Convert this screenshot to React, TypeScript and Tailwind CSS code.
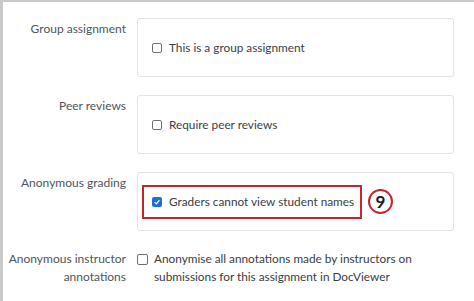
import React from "react";

const textFont = { fontFamily: "Lato, 'Open Sans', sans-serif" };

function Box({ children }: { children: React.ReactNode }) {
  return (
    <div className="flex h-[59px] w-[317px] items-center rounded-[3px] border border-[#e1e3e5] pl-[14px]">
      {children}
    </div>
  );
}

function Check({ checked = false, label }: { checked?: boolean; label: string }) {
  return (
    <label className="flex items-center gap-[7px] text-[11.8px] text-[#394045]">
      {checked ? (
        <span className="flex h-[10px] w-[10px] items-center justify-center rounded-[2px] bg-[#1a6fe0]">
          <svg viewBox="0 0 10 10" className="h-[8px] w-[8px]">
            <path d="M2 5.2 L4.2 7.3 L8 2.8" fill="none" stroke="white" strokeWidth="1.6" />
          </svg>
        </span>
      ) : (
        <span className="h-[10px] w-[10px] rounded-[2px] border border-[#6b7075] bg-white" />
      )}
      <span>{label}</span>
    </label>
  );
}

export default function App() {
  return (
    <div
      className="h-[301px] w-[474px] overflow-hidden border-t-2 border-l-[3px] border-[#c9c9c9] bg-white"
      style={textFont}
    >
      <div className="flex flex-col pt-[16px]">
        <div className="flex">
          <div className="w-[123px] pt-[2px] text-right text-[12px] text-[#4f555a]">Group assignment</div>
          <div className="ml-[11px]">
            <Box>
              <Check label="This is a group assignment" />
            </Box>
          </div>
        </div>

        <div className="mt-[18px] flex">
          <div className="w-[123px] pt-[2px] text-right text-[12px] text-[#4f555a]">Peer reviews</div>
          <div className="ml-[11px]">
            <Box>
              <Check label="Require peer reviews" />
            </Box>
          </div>
        </div>

        <div className="mt-[18px] flex">
          <div className="w-[123px] pt-[2px] text-right text-[12px] text-[#4f555a]">Anonymous grading</div>
          <div className="ml-[11px]">
            <div className="flex h-[59px] w-[317px] items-center rounded-[3px] border border-[#e1e3e5] pl-[4px]">
              <div className="flex h-[34px] w-[220px] items-center border-2 border-[#c1272d] pl-[8px]">
                <Check checked label="Graders cannot view student names" />
              </div>
              <div className="ml-[6px] flex h-[25px] w-[25px] items-center justify-center rounded-full border-2 border-[#c1272d] text-[17px] font-bold text-[#1b1b1b]">
                9
              </div>
            </div>
          </div>
        </div>

        <div className="mt-[19px] flex">
          <div className="w-[123px] text-right text-[12px] leading-[18px] text-[#4f555a]">
            Anonymous instructor
            <br />
            annotations
          </div>
          <div className="ml-[11px] flex items-start gap-[6px]">
            <span className="mt-[4px] h-[11px] w-[11px] shrink-0 rounded-[2px] border border-[#6b7075] bg-white" />
            <div className="text-[11.8px] leading-[18px] text-[#394045]">
              Anonymise all annotations made by instructors on
              <br />
              submissions for this assignment in DocViewer
            </div>
          </div>
        </div>
      </div>
    </div>
  );
}
